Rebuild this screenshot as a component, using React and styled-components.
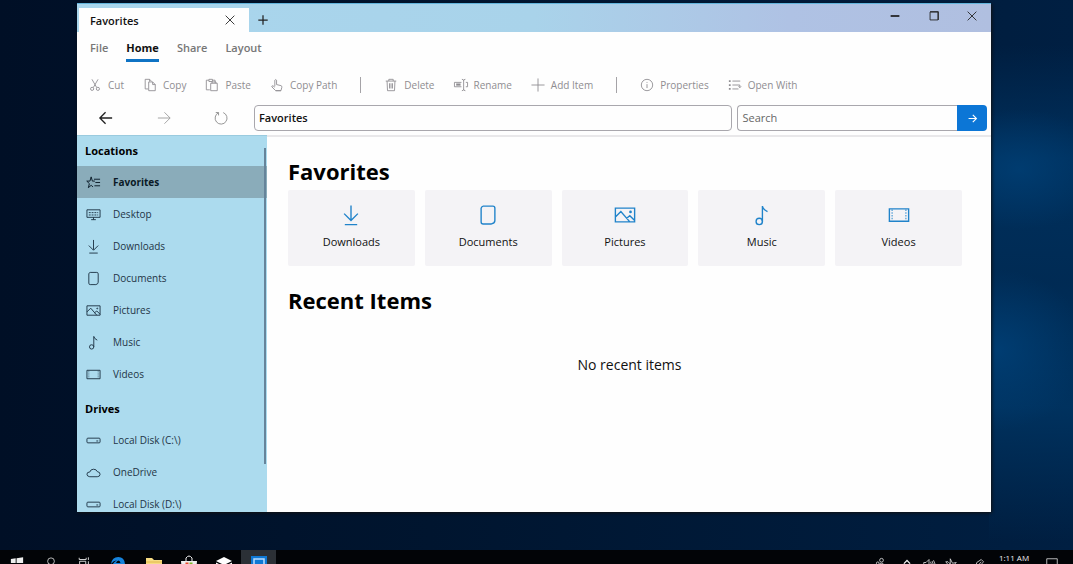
import styled, { createGlobalStyle } from "styled-components"

const GlobalStyle = createGlobalStyle`
  * {
    box-sizing: border-box;
  }
  body {
    margin: 0;
    overflow: hidden;
  }
  button, input {
    font: inherit;
    color: inherit;
    margin: 0;
    padding: 0;
    border: 0;
    background: none;
  }
  a {
    color: inherit;
    text-decoration: none;
  }
`

const Desktop = styled.div`
  display: flex;
  flex-direction: column;
  height: 100vh;
  overflow: hidden;
  font-family: "Open Sans", "Noto Sans", sans-serif;
  font-size: 11px;
  color: #111;
  background:
    radial-gradient(ellipse 90px 60px at 95% 30%, rgba(0, 65, 120, 0.7) 0%, transparent 100%),
    radial-gradient(ellipse 90px 80px at 93% 62%, rgba(0, 67, 124, 0.7) 0%, transparent 100%),
    linear-gradient(to bottom, transparent 8%, rgba(0, 50, 96, 0.9) 28%, rgba(0, 44, 86, 0.9) 50%, rgba(0, 52, 98, 0.9) 72%, transparent 96%) right / 84px 100% no-repeat,
    linear-gradient(to right, #000f26 0%, #00152f 40%, #001f42 100%);
`

const Window = styled.main`
  display: flex;
  flex-direction: column;
  flex: 1;
  min-height: 0;
  margin: 3px 82px 38px 77px;
  background: #fefefe;
  box-shadow: 1px 1px 3px #111;
`

const TitleBar = styled.header`
  display: flex;
  align-items: flex-end;
  height: 29px;
  padding-left: 2px;
  border-top: 1px solid #63b5dd;
  background: linear-gradient(to right, #a9d6ed 0%, #a9d3ea 50%, #afc2e4 78%, #b0bfe0 100%);
`

const Tab = styled.div`
  display: flex;
  align-items: center;
  justify-content: space-between;
  width: 170px;
  height: 24px;
  padding: 0 12px 0 11px;
  background: #fefefe;
  font-weight: 600;
`

const IconButton = styled.button`
  display: flex;
  align-items: center;
  justify-content: center;
  width: ${p => p.$width || 14}px;
  height: 24px;
  color: ${p => p.$color || "#222"};
`

const WindowControls = styled.div`
  display: flex;
  align-self: flex-start;
  margin-left: auto;
`

const Menu = styled.nav`
  display: flex;
  gap: 18px;
  padding: 8px 13px 0;
`

const MenuItem = styled.button`
  height: 22px;
  line-height: 16px;
  padding-bottom: 3px;
  font-weight: ${p => (p.$active ? 700 : 600)};
  color: ${p => (p.$active ? "#111" : "#777")};
  border-bottom: 3px solid ${p => (p.$active ? "#0f73c4" : "transparent")};
`

const Toolbar = styled.div`
  display: flex;
  align-items: center;
  gap: 19px;
  height: 43px;
  padding: 2px 11px 0;
`

const Tool = styled.button`
  display: flex;
  align-items: center;
  gap: 6px;
  font-size: 10px;
  color: #8f8d91;
  white-space: nowrap;
`

const Separator = styled.span`
  width: 1px;
  height: 16px;
  margin: 0 4px;
  background: #a5a3a7;
`

const AddressRow = styled.div`
  display: flex;
  align-items: center;
  height: 30px;
  padding: 0 4px 4px 0;
`

const History = styled.div`
  display: flex;
  justify-content: space-between;
  width: 177px;
  padding: 0 19px 0 15px;
`

const AddressInput = styled.input`
  flex: 475;
  min-width: 0;
  height: 26px;
  padding: 0 4px 2px;
  border: 1px solid #a9a7ad;
  border-radius: 4px;
  font-weight: 600;
`

const SearchBox = styled.form`
  display: flex;
  flex: 253;
  min-width: 0;
  margin-left: 5px;
`

const SearchInput = styled.input`
  flex: 1;
  min-width: 0;
  height: 26px;
  padding: 0 4px 2px;
  border: 1px solid #a9a7ad;
  border-right: 0;
  border-radius: 4px 0 0 4px;
  &::placeholder {
    color: #666;
    opacity: 1;
  }
`

const SearchButton = styled.button`
  display: flex;
  align-items: center;
  justify-content: center;
  width: 30px;
  height: 26px;
  border-radius: 0 4px 4px 0;
  color: white;
  background: #0c76d6;
`

const Body = styled.div`
  display: flex;
  flex: 1;
  min-height: 0;
`

const Sidebar = styled.aside`
  position: relative;
  width: 190px;
  overflow: hidden;
  background: #acdbee;
  border-top: 1px solid #9acbdf;
  &::after {
    content: "";
    position: absolute;
    top: 12px;
    right: 1px;
    width: 2px;
    height: 316px;
    background: #66849a;
  }
`

const SidebarTitle = styled.h2`
  height: 30px;
  margin: 0;
  padding-left: 8px;
  font-size: 11px;
  line-height: 30px;
  font-weight: 700;
  color: #000;
  ul + & {
    margin-top: 4px;
  }
`

const PlaceList = styled.ul`
  list-style: none;
  margin: 0;
  padding: 0;
`

const Place = styled.a`
  display: flex;
  align-items: center;
  gap: 12px;
  height: 32px;
  padding-left: 9px;
  font-size: 10px;
  font-weight: ${p => (p.$active ? 700 : 400)};
  color: ${p => (p.$active ? "#0a1a26" : "#1f3546")};
  background: ${p => (p.$active ? "#8aacba" : "transparent")};
`

const Content = styled.section`
  flex: 1;
  min-width: 0;
  padding: 19px 29px 0 21px;
  border-top: 2px solid #e9e8ea;
`

const Heading = styled.h1`
  margin: 0;
  font-size: 22px;
  line-height: 30px;
  font-weight: 700;
  color: #000;
`

const Cards = styled.div`
  display: grid;
  grid-template-columns: repeat(5, 1fr);
  gap: 10px;
  margin: 4px 0 19px;
`

const Card = styled.a`
  display: flex;
  flex-direction: column;
  align-items: center;
  gap: 8px;
  height: 76px;
  padding-top: 14px;
  border-radius: 2px;
  background: #f4f3f6;
  line-height: 16px;
  svg {
    color: #2083ca;
  }
`

const Empty = styled.p`
  margin: 40px 0 0;
  padding-left: 9px;
  text-align: center;
  font-size: 14px;
  line-height: 20px;
`

const Taskbar = styled.footer`
  display: flex;
  justify-content: space-between;
  height: 14px;
  overflow: hidden;
  color: #eee;
  background: #020407;
`

const TaskGroup = styled.div`
  display: flex;
  align-items: flex-start;
`

const TaskButton = styled.button`
  display: flex;
  justify-content: center;
  flex: none;
  width: ${p => p.$width || 35}px;
  height: 30px;
  padding-top: 6px;
  background: ${p => (p.$active ? "#2b3036" : "transparent")};
`

const TrayButton = styled(TaskButton)`
  padding-top: 8px;
`

const Clock = styled.time`
  width: 34px;
  text-align: center;
  white-space: nowrap;
  font-size: 8px;
  line-height: 15px;
`

const Svg = styled.svg`
  display: block;
  flex: none;
  fill: none;
  stroke: currentColor;
  stroke-width: ${p => p.$stroke || 1};
  overflow: visible;
`

const shapes = {
  cut: <><path d="M4.5 1.5 10 11M11.5 1.5 6 11" /><circle cx="4.7" cy="12.4" r="1.8" /><circle cx="11.3" cy="12.4" r="1.8" /></>,
  copy: <><path d="M6 12.5H2.5v-11h5L10 4M7.5 1.5V4" /><path d="M6.5 4.5h4.5l3 3v7H6.5zM11 4.5v3h3" /></>,
  paste: <><path d="M5.5 13.5h-4v-11h3M8.5 2.5h3v3M4.5 1.5h4V4h-4z" /><path d="M6.5 6H14v8.5H6.5zM8 6V4.500h4.500V6" /></>,
  hand: <path d="M5.500 9.500v-7q1-1.500 2 0v5l5 1.200q1.500.5 1 2l-1 3.800h-6L2 10q0-1.500 1.500-1l2 1.500M6.500 14.500h6" />,
  trash: <path d="M2 3.500h12M5.500 3.500v-2h5v2M3.500 3.500l.5 11h8l.5-11M6.300 6v6M8 6v6M9.700 6v6" />,
  rename: <><path d="M8.500 5H.5v5h8M11 2.500v11M9 1.500q2 0 2 1.500 0-1.500 2-1.500M9 14.500q2 0 2-1.500 0 1.500 2 1.500M13.500 5h2v5h-2" /><path d="M2.500 7.500h5" strokeWidth="2.500" /></>,
  plus: <path d="M8 .5v15M.5 8h15" />,
  info: <><circle cx="8" cy="8" r="6.500" /><path d="M8 7v4.500M8 4.500v1" /></>,
  openWith: <><path d="M5 3.500h9M5 8h8.500v3M5 12.500h7M12 9.500l1.500 1.500L15 9.500" /><path d="M1 3.500h2M1 8h2M1 12.500h2" strokeWidth="2" /></>,
  back: <path d="M15 8H1M7.500 1.500 1 8l6.500 6.500" />,
  forward: <path d="M1 8h14M8.500 1.500 15 8l-6.500 6.500" />,
  refresh: <path d="M10.500 1.800a6.800 6.800 0 1 1-5.500.3M2 1.800h3.200V5" />,
  close: <path d="m3 3 10 10M13 3 3 13" />,
  minimize: <path d="M3 8h10" strokeWidth="2" />,
  maximize: <path d="M3.500 3.500h9v9h-9zM3.500 3h9.500v9.500" />,
  star: <path d="M9.500 6.500H6.800L5.500 2 4.200 6.500H.8l2.800 2.700L2.500 13.500l3-2.500 2 1.700M8.500 4.500H15M10 8h5M9 11.500h6" />,
  desktop: <><path d="M1 3h14v8H1zM8 11v2.500M5.500 13.500h5" /><path d="M3 6h10M3 8.500h10" strokeDasharray="2 1" /></>,
  download: <path d="M8 1v10.500M3 7l5 5 5-5M3.500 15h9" />,
  document: <path d="M4.500 1.500q-1 0-1.500 1.500v10q0 1.500 1.500 1.500h6q2.500-.5 2.500-2.500V3q0-1.500-1.500-1.500z" />,
  picture: <><path d="M1 3h14v10H1zM1 9.500l4-4 6.500 7.500M9 10.500l2.500-2 3.500 3.500" /><circle cx="12" cy="5.800" r=".5" /></>,
  music: <><circle cx="6" cy="12.700" r="2.300" /><path d="M8.300 12.700V1.500q.5 2.500 3.700 4" /></>,
  video: <><path d="M1 3.500h14v9H1z" /><path d="M3 4v8M13 4v8" strokeDasharray="1 1" opacity=".7" /></>,
  disk: <><rect x="1" y="5.500" width="14" height="5" rx="1" /><path d="M11 8.500h2" /></>,
  cloud: <path d="M4 12.500q-3-.3-3-2.700T4 7.500q.8-3 4-3t4 2.500q3.200.5 3 3t-3 2.500z" />,
  windows: <path fill="currentColor" stroke="none" d="M1 3.500 6.500 2.700V8H1zM7.500 2.500 15 1.500V8H7.500zM1 9h5.500v5L1 13zM7.500 9H15v6l-7.500-1z" />,
  search: <><circle cx="8" cy="7" r="4.500" /><path d="m5 10-4 5" /></>,
  taskView: <path d="M3 6h7v7H3zM2.500 2v2h8V2M13 1.500v3M13 6v8" />,
  edge: <path fill="#1683dc" stroke="none" d="M1 8q1-7 7.300-7T15 8.500v1H5.500q.5 4 8.500 2v3Q2 18 2.500 9.500 3 6 7 4.200 3.500 4.500 1 8m5-1h4.500Q10 4.500 8.500 4.500T6 7" />,
  folder: <><path fill="#f7dc84" stroke="none" d="M0 2h6l2 2h8v12H0z" /><path d="M0 6h16" stroke="#e1b84a" /></>,
  store: <><path fill="#eee" stroke="none" d="M0 5h16l-1 11H1z" /><path d="M5 7V2q3-4 6 0v5" /><path stroke="#e84b2d" strokeWidth="3" d="M4.500 8h3" /><path stroke="#7bb72b" strokeWidth="3" d="M8.500 8h3" /></>,
  mail: <path fill="#fff" stroke="none" d="M0 5l8-4 8 4-8 4zM0 6.500l8 4 8-4V16H0z" />,
  app: <><path fill="#0f78d4" stroke="none" d="M0 0h16v16H0z" /><path stroke="#b9dcff" strokeWidth="1.500" d="M3 3h10v7H3z" /></>,
  people: <><circle cx="10" cy="3" r="2.500" /><circle cx="5" cy="7" r="1.800" /><path d="M6 13q0-6 4-6t4 6M2 13q0-4 3-4" /></>,
  chevron: <path d="m3 9 5-5 5 5" />,
  volume: <path d="M1 6h3l4-4v12l-4-4H1zM10 5q2 3 0 6M12 4q3 4 0 8M14 3q4 5 0 10" />,
  network: <path d="M1 5h3l3 3V1l3 6 5-1-4 4 2 5-5-3-4 3 1-5z" />,
  pen: <path d="m3 14 2-8 6-4 3 3-5 6zM5 12l6-7M1 15h8" />,
  notification: <path d="M1 1h14v12H1z" />,
}

const Icon = ({ name, size = 14, stroke }) => (
  <Svg width={size} height={size} viewBox="0 0 16 16" $stroke={stroke} aria-hidden="true">
    {shapes[name]}
  </Svg>
)

const tools = [
  ["cut", "Cut"],
  ["copy", "Copy"],
  ["paste", "Paste"],
  ["hand", "Copy Path"],
  null,
  ["trash", "Delete"],
  ["rename", "Rename"],
  ["plus", "Add Item"],
  null,
  ["info", "Properties"],
  ["openWith", "Open With"],
]

const folders = [
  ["download", "Downloads"],
  ["document", "Documents"],
  ["picture", "Pictures"],
  ["music", "Music"],
  ["video", "Videos"],
]

const locations = [["star", "Favorites"], ["desktop", "Desktop"], ...folders]

const drives = [
  ["disk", "Local Disk (C:\\)"],
  ["cloud", "OneDrive"],
  ["disk", "Local Disk (D:\\)"],
]

const Places = ({ items, active }) => (
  <PlaceList>
    {items.map(([icon, label]) => (
      <li key={label}>
        <Place href="#" $active={label === active}>
          <Icon name={icon} size={15} />
          {label}
        </Place>
      </li>
    ))}
  </PlaceList>
)

const App = () => {
  return (
    <Desktop>
      <GlobalStyle />
      <Window>
        <TitleBar>
          <Tab>
            Favorites
            <IconButton aria-label="Close tab"><Icon name="close" /></IconButton>
          </Tab>
          <IconButton $width={28} aria-label="New tab"><Icon name="plus" size={10} stroke={2} /></IconButton>
          <WindowControls>
            <IconButton $width={38} aria-label="Minimize"><Icon name="minimize" /></IconButton>
            <IconButton $width={39} aria-label="Maximize"><Icon name="maximize" /></IconButton>
            <IconButton $width={38} aria-label="Close"><Icon name="close" /></IconButton>
          </WindowControls>
        </TitleBar>
        <Menu>
          {["File", "Home", "Share", "Layout"].map(label => (
            <MenuItem key={label} $active={label === "Home"}>{label}</MenuItem>
          ))}
        </Menu>
        <Toolbar>
          {tools.map((tool, i) =>
            tool ? (
              <Tool key={tool[1]}>
                <Icon name={tool[0]} />
                {tool[1]}
              </Tool>
            ) : (
              <Separator key={i} />
            )
          )}
        </Toolbar>
        <AddressRow>
          <History>
            <IconButton $width={28} aria-label="Back"><Icon name="back" stroke={1.5} /></IconButton>
            <IconButton $width={28} $color="#999" aria-label="Forward"><Icon name="forward" /></IconButton>
            <IconButton $width={28} $color="#888" aria-label="Refresh"><Icon name="refresh" /></IconButton>
          </History>
          <AddressInput aria-label="Address" defaultValue="Favorites" />
          <SearchBox onSubmit={e => e.preventDefault()}>
            <SearchInput aria-label="Search" placeholder="Search" />
            <SearchButton aria-label="Go"><Icon name="forward" size={9} stroke={2} /></SearchButton>
          </SearchBox>
        </AddressRow>
        <Body>
          <Sidebar>
            <SidebarTitle>Locations</SidebarTitle>
            <Places items={locations} active="Favorites" />
            <SidebarTitle>Drives</SidebarTitle>
            <Places items={drives} />
          </Sidebar>
          <Content>
            <Heading>Favorites</Heading>
            <Cards>
              {folders.map(([icon, label]) => (
                <Card key={label} href="#">
                  <Icon name={icon} size={22} />
                  {label}
                </Card>
              ))}
            </Cards>
            <Heading as="h2">Recent Items</Heading>
            <Empty>No recent items</Empty>
          </Content>
        </Body>
      </Window>
      <Taskbar>
        <TaskGroup>
          <TaskButton $width={33} aria-label="Start"><Icon name="windows" /></TaskButton>
          <TaskButton aria-label="Search"><Icon name="search" size={12} /></TaskButton>
          <TaskButton $width={32} aria-label="Task view"><Icon name="taskView" /></TaskButton>
          <TaskButton $width={36} aria-label="Edge"><Icon name="edge" size={16} /></TaskButton>
          <TaskButton aria-label="File Explorer"><Icon name="folder" size={16} /></TaskButton>
          <TaskButton aria-label="Store"><Icon name="store" size={16} /></TaskButton>
          <TaskButton aria-label="Mail"><Icon name="mail" size={16} /></TaskButton>
          <TaskButton $active aria-label="Files"><Icon name="app" size={16} /></TaskButton>
        </TaskGroup>
        <TaskGroup>
          <TrayButton $width={34} aria-label="People"><Icon name="people" size={12} /></TrayButton>
          <TrayButton $width={20} aria-label="Hidden icons"><Icon name="chevron" size={10} stroke={2} /></TrayButton>
          <TrayButton $width={24} aria-label="Volume"><Icon name="volume" size={12} /></TrayButton>
          <TrayButton $width={20} aria-label="Network"><Icon name="network" size={12} /></TrayButton>
          <TrayButton $width={36} aria-label="Pen"><Icon name="pen" size={12} /></TrayButton>
          <Clock>1:11 AM</Clock>
          <TrayButton $width={42} aria-label="Notifications"><Icon name="notification" size={12} /></TrayButton>
        </TaskGroup>
      </Taskbar>
    </Desktop>
  )
}

export default App
